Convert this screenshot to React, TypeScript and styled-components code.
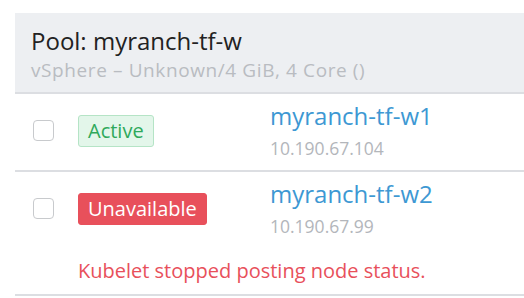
import React from "react";
import styled, { createGlobalStyle } from "styled-components";

const GlobalStyle = createGlobalStyle`
  body {
    margin: 0;
    background: #ffffff;
    font-family: "Open Sans", "Noto Sans", sans-serif;
  }
`;

const Page = styled.div`
  padding: 13px 0 0 15px;
`;

const PoolHeader = styled.div`
  background: #edeff2;
  border-bottom: 2px solid #dcdee2;
  padding: 12px 16px 10px;
`;

const PoolTitle = styled.div`
  font-size: 24px;
  line-height: 32px;
  color: #222222;
`;

const PoolMeta = styled.div`
  font-size: 19px;
  line-height: 24px;
  letter-spacing: 0.6px;
  margin-top: 1px;
  color: #b9bcc1;
`;

const NodeRow = styled.div`
  display: grid;
  grid-template-columns: 63px 192px 1fr;
  align-items: center;
  padding: 7px 0 10px;
  border-bottom: 2px solid #dcdee2;
`;

const Check = styled.span`
  display: block;
  width: 19px;
  height: 19px;
  margin-left: 18px;
  border: 1.5px solid #c8cacd;
  border-radius: 4px;
  background: #ffffff;
`;

const Badge = styled.span<{ $tone: "ok" | "bad" }>`
  justify-self: start;
  font-size: 20px;
  line-height: 28px;
  padding: 1px 9px;
  border-radius: 3px;
  border: 1px solid ${({ $tone }) => ($tone === "ok" ? "#b5e4c6" : "#e8505b")};
  background: ${({ $tone }) => ($tone === "ok" ? "#e3f6ea" : "#e8505b")};
  color: ${({ $tone }) => ($tone === "ok" ? "#2fa95b" : "#ffffff")};
`;

const NodeInfo = styled.div`
  display: flex;
  flex-direction: column;
`;

const NodeName = styled.span`
  font-size: 24px;
  line-height: 30px;
  color: #3d98d3;
`;

const NodeIp = styled.span`
  font-size: 17.5px;
  line-height: 24px;
  margin-top: 5px;
  color: #b3b6bb;
`;

const NodeMessage = styled.div`
  grid-column: 2 / 4;
  font-size: 20px;
  line-height: 26px;
  color: #e8505b;
  margin-top: 20px;
`;

type Node = {
  name: string;
  ip: string;
  state: string;
  tone: "ok" | "bad";
  message?: string;
};

const nodes: Node[] = [
  { name: "myranch-tf-w1", ip: "10.190.67.104", state: "Active", tone: "ok" },
  {
    name: "myranch-tf-w2",
    ip: "10.190.67.99",
    state: "Unavailable",
    tone: "bad",
    message: "Kubelet stopped posting node status.",
  },
];

export default function App() {
  return (
    <Page>
      <GlobalStyle />
      <PoolHeader>
        <PoolTitle>Pool: myranch-tf-w</PoolTitle>
        <PoolMeta>vSphere – Unknown/4 GiB, 4 Core ()</PoolMeta>
      </PoolHeader>
      {nodes.map((n) => (
        <NodeRow key={n.name}>
          <Check />
          <Badge $tone={n.tone}>{n.state}</Badge>
          <NodeInfo>
            <NodeName>{n.name}</NodeName>
            <NodeIp>{n.ip}</NodeIp>
          </NodeInfo>
          {n.message && <NodeMessage>{n.message}</NodeMessage>}
        </NodeRow>
      ))}
    </Page>
  );
}
